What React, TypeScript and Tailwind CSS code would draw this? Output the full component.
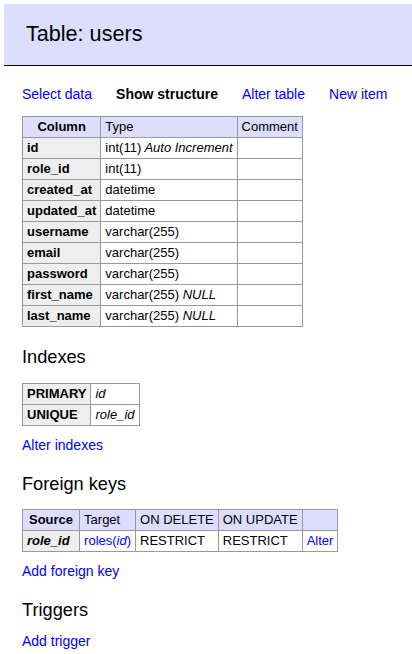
import React from "react";

const columns = [
  { name: "id", type: "int(11)", extra: "Auto Increment" },
  { name: "role_id", type: "int(11)" },
  { name: "created_at", type: "datetime" },
  { name: "updated_at", type: "datetime" },
  { name: "username", type: "varchar(255)" },
  { name: "email", type: "varchar(255)" },
  { name: "password", type: "varchar(255)" },
  { name: "first_name", type: "varchar(255)", extra: "NULL" },
  { name: "last_name", type: "varchar(255)", extra: "NULL" },
];

const cell = "border border-[#999] px-[4px] py-[2px]";
const th = `${cell} bg-[#eee] text-left font-bold`;
const headCell = "border border-[#999] py-[2px] bg-[#ddf] font-normal text-left px-[4px]";
const headTh = "border border-[#999] py-[2px] bg-[#ddf] font-bold text-center px-[6px]";
const link = "text-[#00f]";
const tbl = "mt-[14px] border-collapse text-[13px] leading-[16px]";

export default function App() {
  return (
    <div className="min-h-[654px] bg-white text-black text-[14px] leading-[1.25] font-['Liberation_Sans',Arial,sans-serif] pt-[4px] pl-[22px]">
      <h2 className="ml-[-18px] mb-[20px] bg-[#ddf] border-b border-black px-[22px] py-[17px] text-[21.6px] font-normal leading-[1.25]">
        Table: users
      </h2>

      <p className="flex">
        <a className={`${link} mr-[24px]`}>Select data</a>
        <b className="mr-[24px]">Show structure</b>
        <a className={`${link} mr-[24px]`}>Alter table</a>
        <a className={link}>New item</a>
      </p>

      <table className="mt-[13px] border-collapse text-[13px] leading-[16px]">
        <thead>
          <tr>
            <th className={headTh}>Column</th>
            <td className={headCell}>Type</td>
            <td className={headCell}>Comment</td>
          </tr>
        </thead>
        <tbody>
          {columns.map((c) => (
            <tr key={c.name}>
              <th className={th}>{c.name}</th>
              <td className={cell}>
                {c.type}
                {c.extra && <i> {c.extra}</i>}
              </td>
              <td className={cell}></td>
            </tr>
          ))}
        </tbody>
      </table>

      <h3 className="mt-[19px] text-[18.2px] font-normal">Indexes</h3>
      <table className={tbl}>
        <tbody>
          <tr>
            <th className={th}>PRIMARY</th>
            <td className={cell}>
              <i>id</i>
            </td>
          </tr>
          <tr>
            <th className={th}>UNIQUE</th>
            <td className={cell}>
              <i>role_id</i>
            </td>
          </tr>
        </tbody>
      </table>
      <p className="mt-[11px]">
        <a className={link}>Alter indexes</a>
      </p>

      <h3 className="mt-[18px] text-[18.2px] font-normal">Foreign keys</h3>
      <table className={`${tbl} mt-[13px]`}>
        <thead>
          <tr>
            <th className={headTh}>Source</th>
            <td className={headCell}>Target</td>
            <td className={headCell}>ON DELETE</td>
            <td className={headCell}>ON UPDATE</td>
            <td className={headCell}></td>
          </tr>
        </thead>
        <tbody>
          <tr>
            <th className={th}>
              <i>role_id</i>
            </th>
            <td className={cell}>
              <a className={link}>
                roles(<i>id</i>)
              </a>
            </td>
            <td className={cell}>RESTRICT</td>
            <td className={cell}>RESTRICT</td>
            <td className={cell}>
              <a className={link}>Alter</a>
            </td>
          </tr>
        </tbody>
      </table>
      <p className="mt-[11px]">
        <a className={link}>Add foreign key</a>
      </p>

      <h3 className="mt-[18px] text-[18.2px] font-normal">Triggers</h3>
      <p className="mt-[11px]">
        <a className={link}>Add trigger</a>
      </p>
    </div>
  );
}
